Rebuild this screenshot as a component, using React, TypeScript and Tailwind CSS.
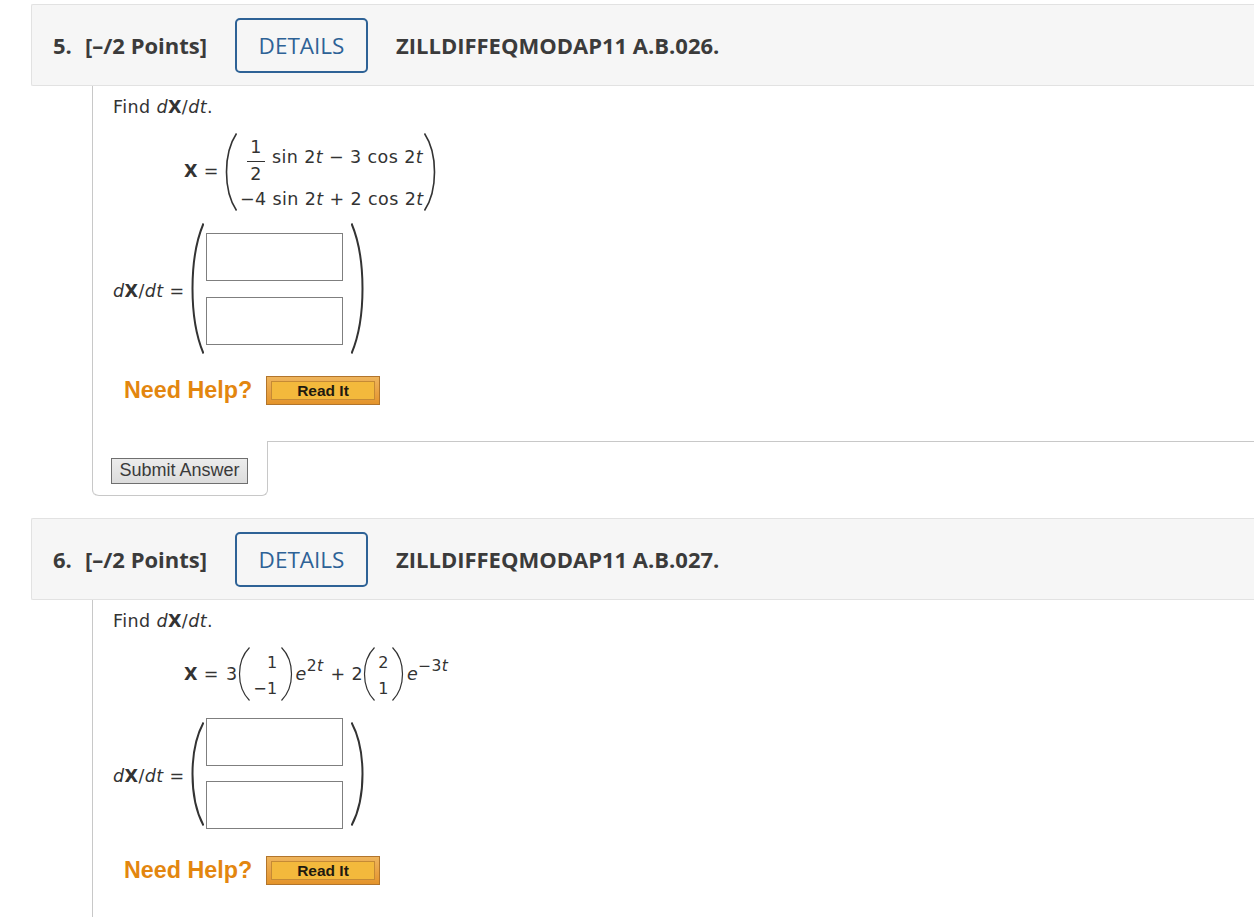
const mathFont = "font-['DejaVu_Sans',sans-serif] text-[17.5px] tracking-[0.4px] text-[#333]"

function Paren({ side, w, h, sw = 1.6 }: { side: 'l' | 'r'; w: number; h: number; sw?: number }) {
  const d =
    side === 'l'
      ? `M${w - 0.5} 0.5 C ${w * 0.25} ${h * 0.17}, 1.5 ${h * 0.33}, 1.5 ${h / 2} C 1.5 ${h * 0.67}, ${w * 0.25} ${h * 0.83}, ${w - 0.5} ${h - 0.5}`
      : `M0.5 0.5 C ${w * 0.75} ${h * 0.17}, ${w - 1.5} ${h * 0.33}, ${w - 1.5} ${h / 2} C ${w - 1.5} ${h * 0.67}, ${w * 0.75} ${h * 0.83}, 0.5 ${h - 0.5}`
  return (
    <svg width={w} height={h} viewBox={`0 0 ${w} ${h}`} className="shrink-0">
      <path d={d} fill="none" stroke="#333" strokeWidth={sw} />
    </svg>
  )
}

function Header({ num, code }: { num: string; code: string }) {
  return (
    <div className="h-[82px] bg-[#f6f6f6] border border-[#e2e2e2] border-r-0 rounded-l-[2px] flex items-center pl-[21px] font-['Open_Sans',sans-serif] font-bold text-[22px] text-[#3b3b3b]">
      <span className="w-[32px] mt-[1px]">{num}</span>
      <span className="w-[150px] mt-[1px]">[–/2 Points]</span>
      <span className="w-[133px] h-[55px] mt-[1px] border-2 border-[#2e6296] rounded-[5px] flex items-center justify-center font-normal text-[22.5px] text-[#2e6296]">
        DETAILS
      </span>
      <span className="ml-[28px] mt-[1px]">{code}</span>
    </div>
  )
}

function FindLine() {
  return (
    <p className={`${mathFont} leading-[20px]`}>
      Find <i>d</i><b>X</b>/<i>dt</i>.
    </p>
  )
}

function AnswerMatrix({ parenH, gap }: { parenH: number; gap: string }) {
  return (
    <div className="flex items-center">
      <span className={`${mathFont} w-[78px] mt-[5px]`}>
        <i>d</i><b>X</b>/<i>dt</i> =
      </span>
      <Paren side="l" w={13} h={parenH} sw={2} />
      <div className={`flex flex-col ml-[2px] ${gap}`}>
        <input className="w-[137px] h-[48px] border border-[#7f7f7f] bg-white" />
        <input className="w-[137px] h-[48px] border border-[#7f7f7f] bg-white" />
      </div>
      <div className="ml-[8px] flex">
        <Paren side="r" w={13} h={parenH} sw={2} />
      </div>
    </div>
  )
}

function NeedHelp() {
  return (
    <div className="flex items-center ml-[31px]">
      <span className="font-['Liberation_Sans',sans-serif] font-bold text-[23.3px] text-[#e3860f] w-[142px]">Need Help?</span>
      <span className="w-[114px] h-[29px] bg-gradient-to-b from-[#eeb45c] to-[#e4942a] border border-[#b2752c] p-[4px] flex">
        <span className="flex-1 bg-[#f3b93c] border border-[#c58a35] flex items-center justify-center font-['Liberation_Sans',sans-serif] font-bold text-[15.5px] text-[#1e1a10]">
          Read It
        </span>
      </span>
    </div>
  )
}

export default function App() {
  return (
    <div className="h-[917px] overflow-hidden bg-white pt-[4px] pl-[31px]">
      <Header num="5." code="ZILLDIFFEQMODAP11 A.B.026." />

      <div className="ml-[61px] border-l border-[#c8c8c8] rounded-bl-[6px]">
        <div className="pl-[20px] pt-[11px] h-[355px]">
          <FindLine />
          {/* X = first matrix */}
          <div className={`${mathFont} flex items-center mt-[15px] ml-[71px]`}>
            <span className="w-[41px]"><b>X</b> =</span>
            <Paren side="l" w={12} h={78} />
            <div className="w-[184px] ml-[3px]">
              <div className="flex items-center justify-end h-[54px] pr-[1px]">
                <span className="flex flex-col items-center w-[18px] leading-[20px] mr-[7px] mt-[2px]">
                  <span className="border-b border-[#333] w-full text-center pb-[4px]">1</span>
                  <span className="pt-[2px]">2</span>
                </span>
                <span className="mb-[3px] whitespace-nowrap">sin 2<i>t</i> − 3 cos 2<i>t</i></span>
              </div>
              <div className="text-right whitespace-nowrap leading-[24px] pt-[1px] pr-[1px]">
                −4 sin 2<i>t</i> + 2 cos 2<i>t</i>
              </div>
            </div>
            <Paren side="r" w={12} h={78} />
          </div>

          <div className="mt-[12px]">
            <AnswerMatrix parenH={131} gap="gap-[16px]" />
          </div>
          <div className="mt-[19px] -ml-[20px]">
            <NeedHelp />
          </div>
        </div>

        {/* submit tab */}
        <div className="flex h-[55px]">
          <div className="w-[175px] border-r border-b border-[#c8c8c8] rounded-b-[6px] pl-[18px] pt-[17px]">
            <button className="w-[137px] h-[26px] pb-[2px] border border-[#6f6f6f] bg-gradient-to-b from-[#ececec] to-[#dcdcdc] font-['Liberation_Sans',sans-serif] text-[18px] leading-none text-[#3a3a3a]">
              Submit Answer
            </button>
          </div>
          <div className="flex-1 border-t border-[#c8c8c8]" />
        </div>
      </div>

      <div className="mt-[22px]">
        <Header num="6." code="ZILLDIFFEQMODAP11 A.B.027." />
      </div>

      <div className="ml-[61px] border-l border-[#c8c8c8] h-[320px]">
        <div className="pl-[20px] pt-[11px]">
          <FindLine />
          {/* X = second expression */}
          <div className={`${mathFont} flex items-center mt-[15px] ml-[71px] whitespace-nowrap`}>
            <span className="w-[42px]"><b>X</b> =</span>
            <span>3</span>
            <Paren side="l" w={12} h={54} sw={1.2} />
            <span className="flex flex-col items-end w-[28px] mr-[3px] mt-[4px] text-[16px] leading-[26px]">
              <span>1</span>
              <span>−1</span>
            </span>
            <Paren side="r" w={12} h={54} sw={1.2} />
            <span className="ml-[3px]"><i>e</i></span>
            <span className="text-[15.5px] mb-[14px]">2<i>t</i></span>
            <span className="ml-[7px]">+ 2</span>
            <Paren side="l" w={12} h={54} sw={1.2} />
            <span className="flex flex-col items-center w-[17px] mt-[4px] text-[16px] leading-[26px]">
              <span>2</span>
              <span>1</span>
            </span>
            <Paren side="r" w={12} h={54} sw={1.2} />
            <span className="ml-[3px]"><i>e</i></span>
            <span className="text-[15.5px] mb-[14px]">−3<i>t</i></span>
          </div>

          <div className="mt-[16px]">
            <AnswerMatrix parenH={104} gap="gap-[15px]" />
          </div>
          <div className="mt-[24px] -ml-[20px]">
            <NeedHelp />
          </div>
        </div>
      </div>
    </div>
  )
}
